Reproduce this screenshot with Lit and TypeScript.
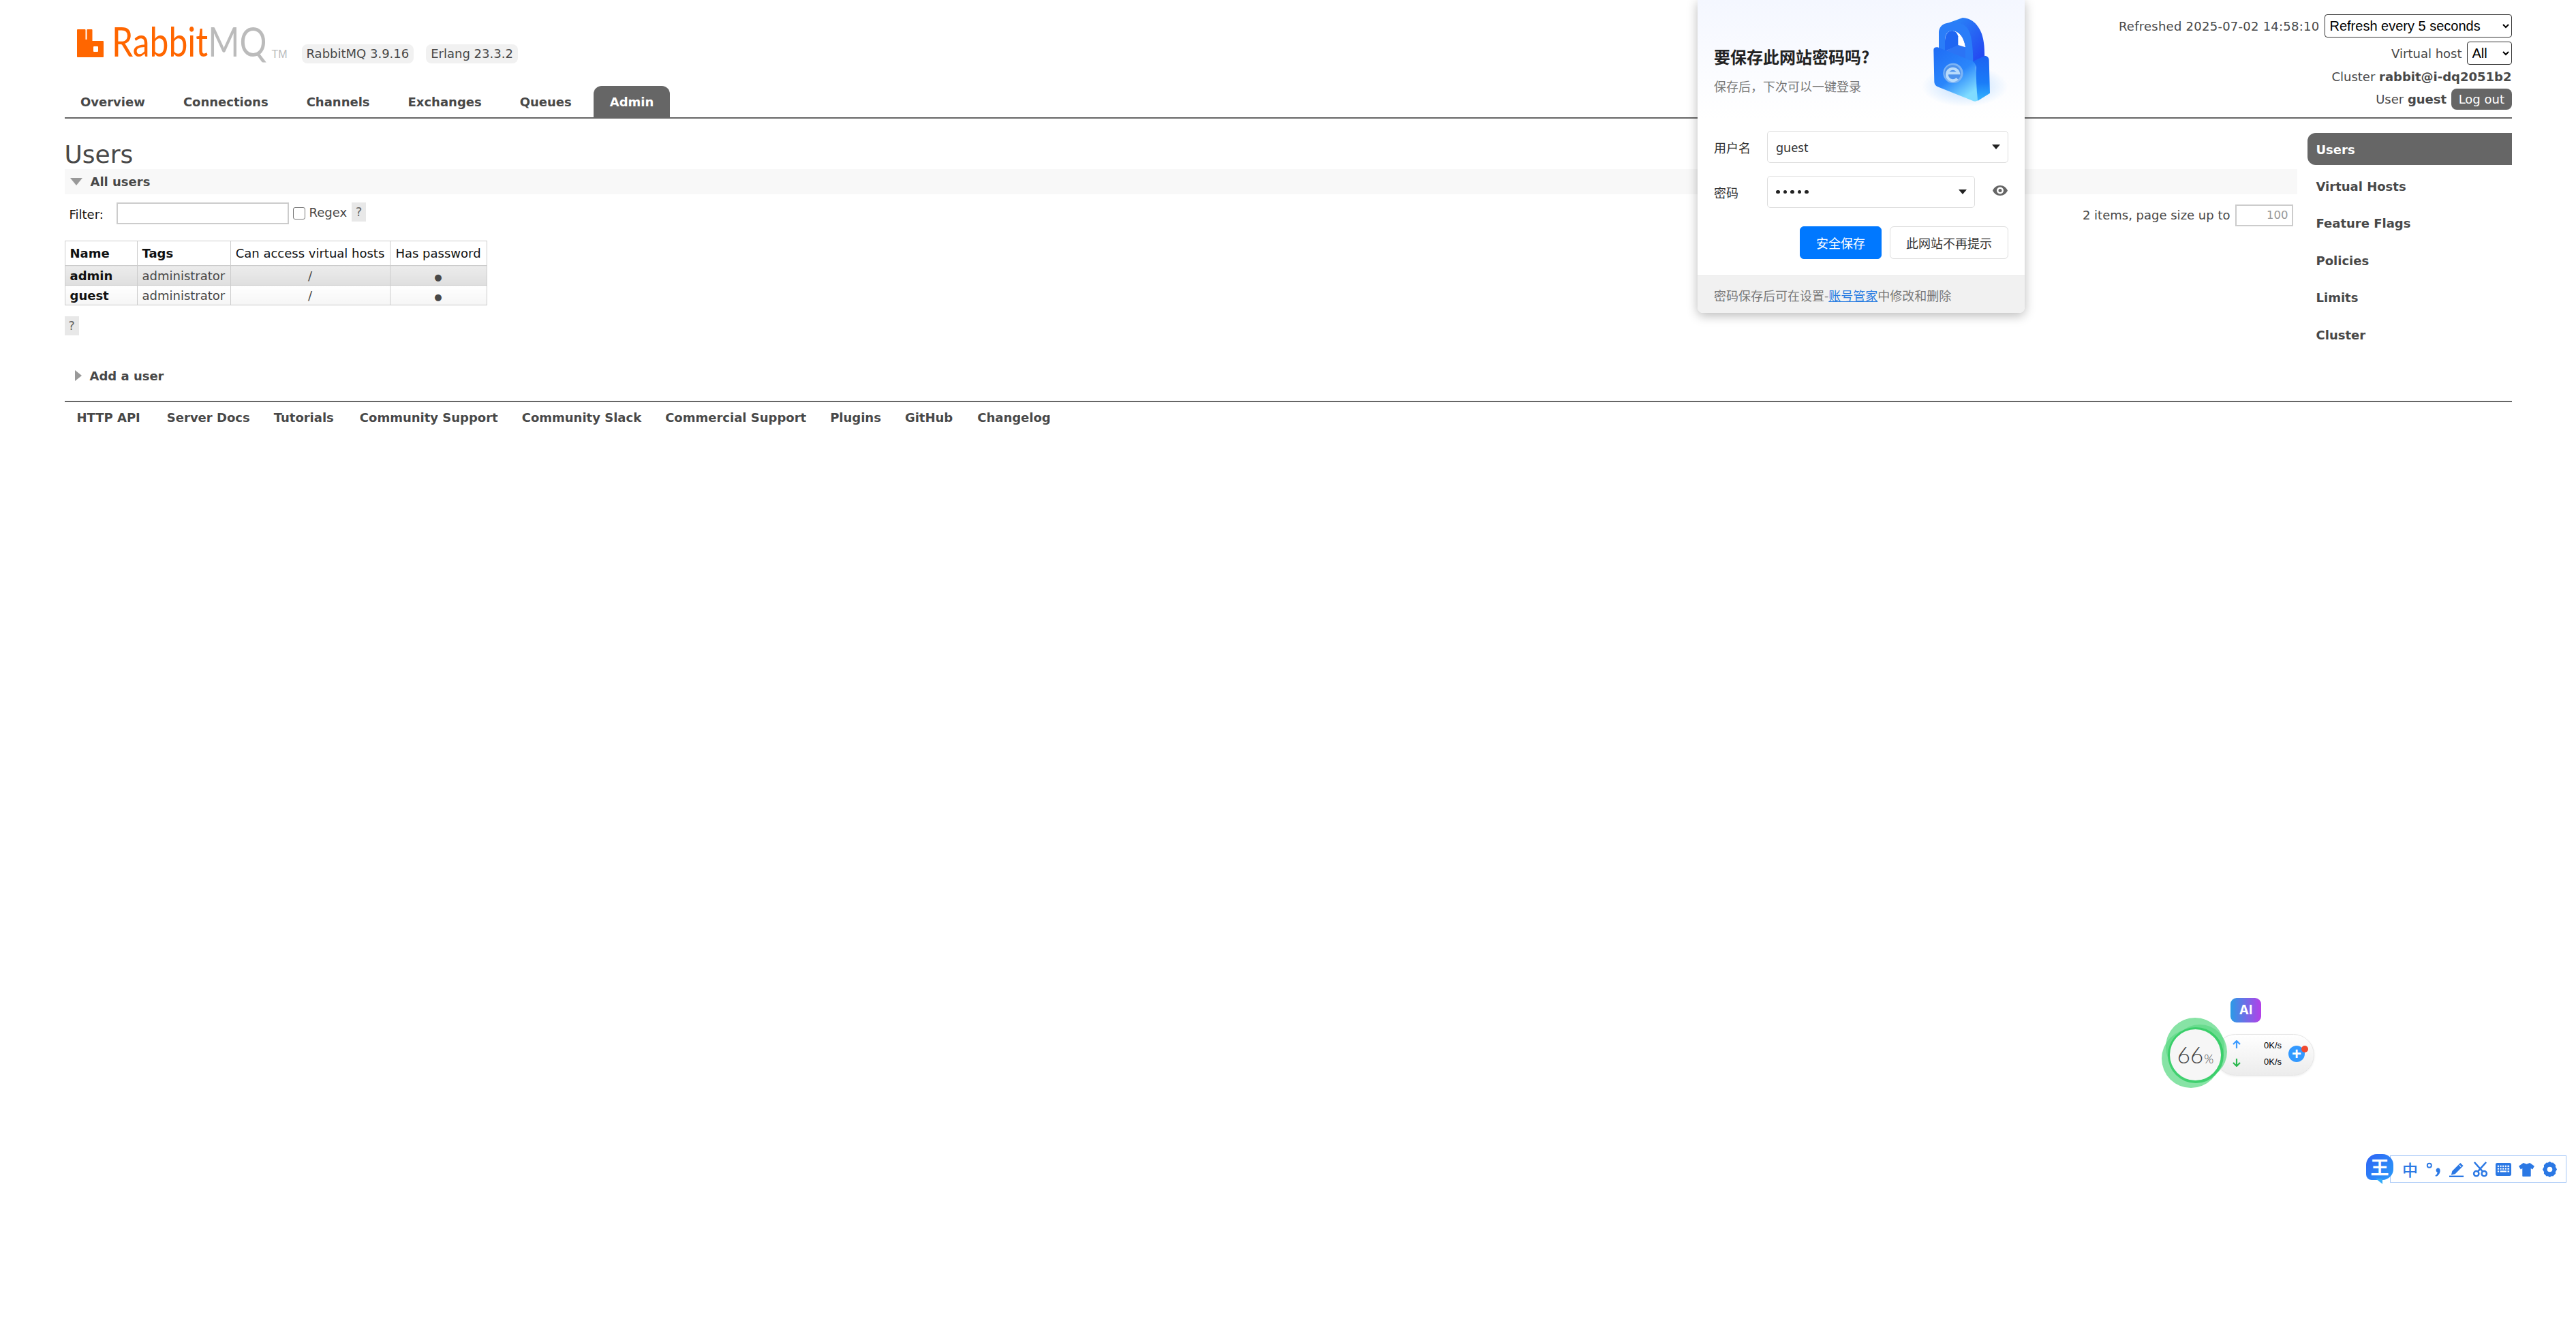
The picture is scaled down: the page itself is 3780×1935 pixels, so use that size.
import { LitElement, html, css, svg } from "lit";
import { customElement } from "lit/decorators.js";

const tabs = ["Overview", "Connections", "Channels", "Exchanges", "Queues", "Admin"];
const side = ["Users", "Virtual Hosts", "Feature Flags", "Policies", "Limits", "Cluster"];
const foot = ["HTTP API", "Server Docs", "Tutorials", "Community Support", "Community Slack", "Commercial Support", "Plugins", "GitHub", "Changelog"];
const users = ["admin", "guest"];
const subText = "保存后\uFF0C下次可以一键登录";

const lock = svg`<svg class="lock" viewBox="0 0 540 480" aria-hidden="true">
  <defs>
    <linearGradient id="lb" x1="0" y1="0" x2="0.6" y2="1"><stop offset="0" stop-color="#1f6cf5"/><stop offset=".6" stop-color="#2a86fb"/><stop offset="1" stop-color="#7fdcff"/></linearGradient>
    <linearGradient id="ls" x1="0" y1="0" x2="0" y2="1"><stop offset="0" stop-color="#1c62f2"/><stop offset=".6" stop-color="#1a7cf8"/><stop offset="1" stop-color="#35b6ff"/></linearGradient>
    <linearGradient id="lh" x1="0" y1="0" x2="1" y2="1"><stop offset="0" stop-color="#2a8cf8"/><stop offset="1" stop-color="#2340f0"/></linearGradient>
    <radialGradient id="lg"><stop offset="0" stop-color="#6db4ff" stop-opacity=".45"/><stop offset="1" stop-color="#6db4ff" stop-opacity="0"/></radialGradient>
  </defs>
  <ellipse cx="310" cy="350" rx="190" ry="90" fill="url(#lg)"/>
  <path d="M240 70 L300 48 Q350 50 378 105 Q398 145 396 225 L345 250 L300 180 Z" fill="url(#lh)"/>
  <path d="M222 195 L222 150 Q224 106 255 105 Q300 110 312 175 L312 235 Z" fill="#fff"/>
  <path d="M222 195 L222 150 Q224 106 255 105 Q275 108 280 130 L280 172 L222 195 Z" fill="#1f66f2"/>
  <path d="M222 195 L280 168 L312 178 L312 235 Z" fill="#2b74f5"/>
  <path d="M195 190 V110 Q198 76 240 70 Q292 60 322 95 Q346 130 346 248 L312 235 V175 Q300 108 255 105 Q222 106 222 150 V200 Z" fill="#2a7df8"/>
  <path d="M172 190 Q172 176 190 178 L345 240 L358 250 L366 412 Q355 420 340 412 L190 352 Q175 345 175 330 Z" fill="url(#lb)"/>
  <path d="M345 240 L398 215 Q416 218 416 235 L420 380 L366 414 Q358 330 360 268 Q358 250 345 240 Z" fill="url(#ls)"/>
  <circle cx="258" cy="292" r="44" fill="#7db4f4"/>
  <circle cx="256" cy="292" r="36" fill="#4d92ec"/>
  <path d="M232 292 H282 A26 26 0 1 0 276 316" fill="none" stroke="#b8dbfb" stroke-width="12"/>
</svg>`;

const rabbitIcon = svg`<svg class="ricon" viewBox="0 0 39 41" aria-hidden="true"><path fill-rule="evenodd" fill="#ff6600" d="M1 0H11.500Q12.500 0 12.500 1V15H14.500V1Q14.500 0 15.500 0H21.500Q22.500 0 22.500 1V17H38Q39 17 39 18V40Q39 41 38 41H1Q0 41 0 40V1Q0 0 1 0ZM25 25Q24 25 24 26V32Q24 33 25 33H30Q31 33 31 32V26Q31 25 30 25Z"/></svg>`;

const caret = svg`<svg class="caret" viewBox="0 0 12 7" aria-hidden="true"><path d="M0 0H12L6 7Z" fill="#222"/></svg>`;
const eye = svg`<svg class="eye" viewBox="0 0 22 15" aria-hidden="true"><path fill-rule="evenodd" fill="#666" d="M11 0C16 0 20 3 22 7.500C20 12 16 15 11 15C6 15 2 12 0 7.500C2 3 6 0 11 0ZM11 2.500A5 5 0 1 0 11 12.500A5 5 0 1 0 11 2.500ZM11 5A2.500 2.500 0 1 1 11 10A2.500 2.500 0 1 1 11 5Z"/></svg>`;

const imeIcons = [
  svg`<svg viewBox="0 0 24 24"><circle cx="5" cy="6" r="3.200" fill="none" stroke="#2b78e4" stroke-width="2"/><path d="M18 10Q22 10 21.500 15Q20.500 21 15 23L14 21.500Q17 19.500 17.500 17Q14.500 15 15.500 12Q16.500 10 18 10Z" fill="#2b78e4"/></svg>`,
  svg`<svg viewBox="0 0 24 24"><path d="M17 2L21.500 6.500L9 19L3 20.500L4.500 14.500Z" fill="#2b78e4"/><path d="M15.500 5.500L18 8" stroke="#fff" stroke-width="1.200"/><rect x="0" y="21.500" width="22" height="2.500" fill="#2b78e4"/></svg>`,
  svg`<svg viewBox="0 0 24 24"><g fill="none" stroke="#2b78e4" stroke-width="2.600"><path d="M3 1L15.500 15M21 1L8.500 15"/><circle cx="6" cy="18.500" r="3.800"/><circle cx="18" cy="18.500" r="3.800"/></g></svg>`,
  svg`<svg viewBox="0 0 24 20"><rect width="24" height="20" rx="2.500" fill="#2b78e4"/><g fill="#fff"><rect x="3" y="4" width="2.200" height="2.200"/><rect x="6.800" y="4" width="2.200" height="2.200"/><rect x="10.600" y="4" width="2.200" height="2.200"/><rect x="14.400" y="4" width="2.200" height="2.200"/><rect x="18.200" y="4" width="2.800" height="2.200"/><rect x="3" y="8" width="2.200" height="2.200"/><rect x="6.800" y="8" width="2.200" height="2.200"/><rect x="10.600" y="8" width="2.200" height="2.200"/><rect x="14.400" y="8" width="2.200" height="2.200"/><rect x="18.200" y="8" width="2.800" height="2.200"/><rect x="3" y="12" width="2.200" height="2.200"/><rect x="6.800" y="12" width="10" height="2.200"/><rect x="18.200" y="12" width="2.800" height="2.200"/></g></svg>`,
  svg`<svg viewBox="0 0 24 22"><path d="M7 1L12 3L17 1L24 6L21 11L18.500 9.500V21Q18.500 22 17.500 22H6.500Q5.500 22 5.500 21V9.500L3 11L0 6Z" fill="#2b78e4"/></svg>`,
  svg`<svg viewBox="0 0 24 24"><path fill-rule="evenodd" fill="#2b78e4" d="M12 0L15 1.700L17 1.500L21 5.500L20.800 8L23 12L20.800 16L21 18.500L17 22.500L15 22.300L12 24L9 22.300L7 22.500L3 18.500L3.200 16L1 12L3.200 8L3 5.500L7 1.500L9 1.700ZM12 8A4 4 0 1 0 12 16A4 4 0 1 0 12 8Z"/></svg>`,
];

@customElement("app-root")
export class AppRoot extends LitElement {
  static styles = css`
    :host { display: block; position: relative; height: 1935px; overflow: hidden; background: #fff; font: 18px "DejaVu Sans", Verdana, sans-serif; color: #484848; }
    * { box-sizing: border-box; }
    .outer { width: 95%; margin: 0 auto; }
    header { display: flex; justify-content: space-between; height: 174px; border-bottom: 2px solid #666; }
    .brand { display: flex; align-items: flex-start; padding: 43px 0 0 18px; height: 126px; }
    .ricon { width: 39px; height: 41px; flex: none; margin-right: 12px; }
    .wordmark { font: 400 60px/41px Lato, sans-serif; color: #ff6600; width: 227px; margin-top: -3px; flex: none; white-space: nowrap; transform: scaleX(.83); transform-origin: 0 0; }
    .wordmark span { color: #bbb; }
    .tm { font: 400 16px/12px "Liberation Sans", sans-serif; color: #bbb; margin: 31px 0 0 8px; width: 23px; flex: none; }
    .badge { background: #f1f1f1; border-radius: 8px; height: 28px; line-height: 28px; padding: 0 7px; margin: 22px 0 0 21px; white-space: nowrap; }
    .badge + .badge { margin-left: 18px; }
    nav { display: flex; height: 47px; }
    nav a { font-weight: 700; height: 47px; line-height: 47px; padding: 0 23.500px; margin-right: 9px; white-space: nowrap; }
    nav a.on { background: #666; color: #fff; border-radius: 12px 12px 0 0; margin-right: 0; }
    .status { display: flex; flex-direction: column; align-items: flex-end; padding-top: 21px; }
    .st { display: flex; align-items: center; justify-content: flex-end; gap: 7px; white-space: nowrap; }
    .stamp { letter-spacing: .25px; }
    select { font: 20px "Liberation Sans", sans-serif; color: #000; background: #fff; border: 1.500px solid #333; border-radius: 4px; height: 34px; padding: 0 3px; }
    .st + .st { margin-top: 6px; }
    .s1 { width: 275px; }
    .s2 { width: 66px; }
    .cluster { margin-top: 5px !important; height: 24px; }
    .logout { background: #666; color: #fff; border-radius: 8px; height: 31px; line-height: 31px; padding: 0 10.500px; }
    .st.user { margin-top: 6px !important; }
    main { display: grid; grid-template-columns: 3276px 300px; column-gap: 15px; }
    h1 { font-size: 36px; font-weight: 400; margin: 0; height: 74px; line-height: 106px; color: #484848; }
    .sec { display: flex; align-items: center; gap: 12px; font-weight: 700; white-space: nowrap; }
    .sec.open { background: #f8f8f8; height: 37px; padding-left: 8px; }
    .tri-d { width: 0; height: 0; border-left: 9px solid transparent; border-right: 9px solid transparent; border-top: 11px solid #999; }
    .tri-r { width: 0; height: 0; border-top: 8px solid transparent; border-bottom: 8px solid transparent; border-left: 10px solid #999; margin-left: 15px; }
    .filter { display: flex; justify-content: space-between; height: 68px; padding: 12px 6px 0 7px; }
    .fl { display: flex; align-items: flex-start; }
    .fl label { color: #111; width: 69px; line-height: 36px; }
    .ti { border: 2px solid #ccc; height: 32px; background: #fff; display: block; }
    .ti.f { width: 253px; }
    .cb { width: 18px; height: 18px; margin: 7px 6px 0 6px; border: 1.500px solid #767676; border-radius: 3px; background: #fff; }
    .rx { line-height: 30px; margin-right: 7px; }
    .help { background: #e8e8e8; color: #666; width: 21px; height: 28px; line-height: 28px; text-align: center; }
    .fr { display: flex; align-items: flex-start; line-height: 32px; margin-top: 3px; }
    .ti.p { width: 85px; margin-left: 7px; text-align: right; color: #999; line-height: 28px; padding-right: 5px; font-size: 16.500px; }
    table { border-collapse: collapse; table-layout: fixed; width: 619px; }
    th, td { border: 1.500px solid #ccc; padding: 0; white-space: nowrap; }
    th { height: 36px; font-weight: 400; color: #111; background: #fff; }
    td { height: 29px; text-align: center; }
    .l { text-align: left; padding-left: 7px; }
    .b { font-weight: 700; color: #111; }
    .c1 { width: 106px; } .c2 { width: 137px; } .c3 { width: 234px; } .c4 { width: 142px; }
    tr.r0 td { background: linear-gradient(#ececec, #dfdfdf); }
    tr.r1 td { background: linear-gradient(#fff, #f5f5f5); }
    .dot { font-size: 13px; }
    .help.t { display: block; margin: 16px 0 0; }
    .sec.add { margin-top: 48px; height: 22px; }
    .links { display: flex; gap: 36px; margin-top: 26px; border-top: 2px solid #666; padding: 12px 0 0 18px; font-weight: 700; white-space: nowrap; line-height: 22px; }
    .links a:nth-child(1) { margin-right: 3px; }
    .links a:nth-child(2) { margin-right: -1px; }
    .links a:nth-child(3) { margin-right: 2px; }
    .links a:nth-child(4), .links a:nth-child(5), .links a:nth-child(6), .links a:nth-child(7) { margin-right: -1px; }
    aside { padding-top: 21px; }
    aside a { display: block; height: 47px; line-height: 48px; padding-left: 13px; font-weight: 700; margin-bottom: 7.500px; }
    aside a.on { background: #666; color: #fff; border-radius: 12px 0 0 12px; line-height: 49px; }

    .pop { position: absolute; left: 2491px; top: 0; width: 480px; height: 459px; background: #fff; border-radius: 0 0 8px 8px; box-shadow: 0 4px 16px rgba(0,0,0,.28); font-family: "Noto Sans", "Noto Sans CJK SC", sans-serif; display: flex; flex-direction: column; color: #222; }
    .hero { height: 176px; flex: none; background: linear-gradient(#f4f7ff, #fff); display: flex; justify-content: space-between; padding: 10px 0 0 24px; }
    .title { font: 700 24px/32px "Noto Sans CJK SC", sans-serif; color: #222; margin-top: 57px; white-space: nowrap; }
    .sub { font: 400 18px/26px "Noto Sans CJK SC", sans-serif; color: #777; margin-top: 14px; white-space: nowrap; }
    .lock { width: 180px; height: 160px; flex: none; margin-right: 11px; }
    .frow { display: flex; align-items: center; padding: 0 24px; height: 47px; margin-top: 16px; }
    .frow.second { margin-top: 19px; }
    .flabel { font: 18px "Noto Sans CJK SC", sans-serif; width: 78px; flex: none; color: #333; }
    .inp { height: 47px; border: 1.500px solid #ddd; border-radius: 5px; display: flex; align-items: center; justify-content: space-between; padding: 0 11px 0 12px; color: #333; font-size: 18px; flex: none; }
    .inp.u { width: 354px; }
    .inp.w { width: 305px; }
    .caret { width: 12px; height: 7px; }
    .eye { width: 22px; height: 15px; margin: -5px 0 0 26px; flex: none; }
    .dots { display: flex; gap: 5px; }
    .dots i { width: 5.500px; height: 5.500px; border-radius: 50%; background: #222; }
    .acts { display: flex; justify-content: flex-end; gap: 12px; padding: 27px 24px 0 0; }
    .btn { height: 48px; border-radius: 6px; font: 18px/46px "Noto Sans CJK SC", sans-serif; text-align: center; border: 1.500px solid #ddd; color: #333; width: 174px; background: #fff; }
    .btn.pri { width: 120px; background: #0078ff; border-color: #0078ff; color: #fff; }
    .pfoot { margin-top: auto; height: 55px; background: #f1f1f1; border-top: 1px solid #e8e8e8; border-radius: 0 0 8px 8px; font: 18px/56px "Noto Sans CJK SC", sans-serif; color: #777; padding-left: 24px; white-space: nowrap; }
    .pfoot a { color: #2a7de1; text-decoration: underline; }

    .ai { position: absolute; left: 3273px; top: 1464px; width: 45px; height: 36px; border-radius: 9px; background: linear-gradient(90deg, #2a9be6, #b53fe8); color: #fff; font: 700 19px/36px "Inter", sans-serif; text-align: center; }
    .pill { position: absolute; left: 3250px; top: 1517px; width: 146px; height: 61px; border-radius: 31px; background: linear-gradient(#fff, #ececec); border: 1.500px solid #e6e6e6; box-shadow: 0 1px 3px rgba(0,0,0,.08); }
    .speed { position: absolute; left: 3322px; font: 13px/16px "Liberation Sans", sans-serif; color: #000; white-space: nowrap; }
    .s-up { top: 1526px; } .s-dn { top: 1550px; }
    .arrow { position: absolute; left: 3276px; width: 12px; height: 13px; }
    .a-up { top: 1526px; } .a-dn { top: 1552px; }
    .plus { position: absolute; left: 3358px; top: 1534px; width: 24px; height: 24px; border-radius: 50%; background: #3399ff; color: #fff; font: 700 24px/23px "Liberation Sans", sans-serif; text-align: center; }
    .red { position: absolute; left: 3377px; top: 1534px; width: 10px; height: 10px; border-radius: 50%; background: #f04a30; }
    .blob { position: absolute; border-radius: 50%; background: #5fd987; opacity: .75; }
    .b1 { left: 3178px; top: 1493px; width: 86px; height: 86px; }
    .b2 { left: 3172px; top: 1510px; width: 86px; height: 86px; }
    .b3 { left: 3188px; top: 1503px; width: 80px; height: 80px; }
    .b4 { left: 3181px; top: 1507px; width: 82px; height: 82px; background: #2ecb62; opacity: .8; }
    .gauge { position: absolute; left: 3184px; top: 1510px; width: 75px; height: 75px; border-radius: 50%; background: #f6f6f6; display: flex; align-items: baseline; justify-content: center; gap: 1px; font: 300 33px/75px Lato, sans-serif; color: #444; }
    .gauge small { font-size: 18px; }

    .ime { position: absolute; left: 3507px; top: 1695px; width: 259px; height: 40px; border: 1.500px solid #a3c6f7; background: #fff; display: flex; align-items: center; gap: 11px; padding-left: 17px; }
    .ime svg { width: 23px; height: 23px; flex: none; }
    .zh { font: 500 23px/23px "Noto Sans CJK SC", sans-serif; color: #2b78e4; width: 24px; flex: none; }
    .bub { position: absolute; left: 3472px; top: 1693px; width: 40px; height: 38px; border-radius: 16px 16px 16px 8px; background: linear-gradient(135deg, #2f62f5, #2a9cf8); color: #fff; font: 700 27px/38px "Noto Sans CJK SC", sans-serif; text-align: center; }
    .tail { position: absolute; left: 3486px; top: 1729px; width: 0; height: 0; border-top: 8px solid #33aaf8; border-left: 10px solid transparent; }
  `;

  render() {
    return html`
      <div class="outer">
        <header>
          <div>
            <div class="brand">
              ${rabbitIcon}
              <div class="wordmark">Rabbit<span>MQ</span></div>
              <div class="tm">TM</div>
              <div class="badge">RabbitMQ 3.9.16</div>
              <div class="badge">Erlang 23.3.2</div>
            </div>
            <nav>${tabs.map((t) => html`<a class=${t === "Admin" ? "on" : ""}>${t}</a>`)}</nav>
          </div>
          <div class="status">
            <div class="st"><span class="stamp">Refreshed 2025-07-02 14:58:10</span> <select class="s1"><option>Refresh every 5 seconds</option></select></div>
            <div class="st">Virtual host <select class="s2"><option>All</option></select></div>
            <div class="st cluster"><span>Cluster <b>rabbit@i-dq2051b2</b></span></div>
            <div class="st user"><span>User <b>guest</b></span><span class="logout">Log out</span></div>
          </div>
        </header>
        <main>
          <section>
            <h1>Users</h1>
            <div class="sec open"><i class="tri-d"></i>All users</div>
            <div class="filter">
              <div class="fl">
                <label>Filter:</label>
                <div class="ti f"></div>
                <div class="cb"></div>
                <span class="rx">Regex</span>
                <span class="help">?</span>
              </div>
              <div class="fr">2 items, page size up to <div class="ti p">100</div></div>
            </div>
            <table>
              <colgroup><col class="c1" /><col class="c2" /><col class="c3" /><col class="c4" /></colgroup>
              <thead><tr><th class="l b">Name</th><th class="l b">Tags</th><th>Can access virtual hosts</th><th>Has password</th></tr></thead>
              <tbody>
                ${users.map((u, i) => html`<tr class="r${i}"><td class="l b">${u}</td><td class="l">administrator</td><td>/</td><td><span class="dot">●</span></td></tr>`)}
              </tbody>
            </table>
            <span class="help t">?</span>
            <div class="sec add"><i class="tri-r"></i>Add a user</div>
          </section>
          <aside>${side.map((s, i) => html`<a class=${i === 0 ? "on" : ""}>${s}</a>`)}</aside>
        </main>
        <div class="links">${foot.map((f) => html`<a>${f}</a>`)}</div>
      </div>

      <div class="pop">
        <div class="hero">
          <div>
            <div class="title">要保存此网站密码吗?</div>
            <div class="sub">${subText}</div>
          </div>
          ${lock}
        </div>
        <div class="frow"><div class="flabel">用户名</div><div class="inp u"><span>guest</span>${caret}</div></div>
        <div class="frow second"><div class="flabel">密码</div><div class="inp w"><span class="dots"><i></i><i></i><i></i><i></i><i></i></span>${caret}</div>${eye}</div>
        <div class="acts"><div class="btn pri">安全保存</div><div class="btn">此网站不再提示</div></div>
        <div class="pfoot">密码保存后可在设置-<a>账号管家</a>中修改和删除</div>
      </div>

      <div class="ai">AI</div>
      <div class="pill"></div>
      <div class="blob b1"></div><div class="blob b2"></div><div class="blob b3"></div><div class="blob b4"></div>
      <div class="gauge">66<small>%</small></div>
      <svg class="arrow a-up" viewBox="0 0 12 13"><path d="M6 1V12M1 6L6 1L11 6" fill="none" stroke="#3b9bff" stroke-width="2.200"/></svg>
      <svg class="arrow a-dn" viewBox="0 0 12 13"><path d="M6 12V1M1 7L6 12L11 7" fill="none" stroke="#2cb84f" stroke-width="2.200"/></svg>
      <div class="speed s-up">0K/s</div>
      <div class="speed s-dn">0K/s</div>
      <div class="plus">+</div>
      <div class="red"></div>

      <div class="ime"><span class="zh">中</span>${imeIcons}</div>
      <div class="bub">王</div><div class="tail"></div>
    `;
  }
}
